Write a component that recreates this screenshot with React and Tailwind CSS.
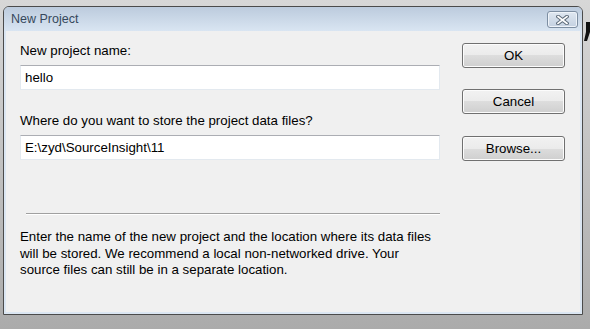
import React from 'react';

const font = { fontFamily: '"Liberation Sans", Arial, sans-serif' };

function WinButton({ children, className = '' }) {
  return (
    <button
      type="button"
      className={`h-[25px] w-[103px] rounded-[3px] border border-[#707070] bg-[linear-gradient(to_bottom,#f2f2f2_0%,#ebebeb_50%,#dddddd_50%,#cfcfcf_100%)] shadow-[inset_0_0_0_1px_#fcfcfc] text-[13.3px] leading-[23px] text-black ${className}`}
    >
      {children}
    </button>
  );
}

function TextBox({ value }) {
  return (
    <div className="h-[25px] w-[420px] border border-[#e3e9ef] border-t-[#abadb3] bg-white pl-[4px] text-[13.3px] leading-[23px] text-black">
      {value}
    </div>
  );
}

export default function App() {
  return (
    <div
      className="relative h-[329px] w-[590px] overflow-hidden bg-[linear-gradient(to_bottom,#d7d7d7,#ababab)] pl-[3px] pt-[6px]"
      style={font}
    >
      {/* bit of the desktop showing past the window */}
      <svg className="absolute left-[583px] top-[22px]" width="7" height="19" viewBox="0 0 7 19">
        <path d="M3 0 L7 0 L7 10 L4 19 L1 19 L3 10 Z" fill="#111" />
      </svg>

      {/* dialog window */}
      <div className="flex h-[309px] w-[580px] flex-col rounded-t-[6px] border border-[#4b4b4b] bg-[#dbe6f2]">
        {/* title bar */}
        <div className="flex h-[24px] items-start rounded-t-[5px] bg-[linear-gradient(to_bottom,#bccbdd,#d9e5f2)]">
          <span className="ml-[7px] mt-[5px] text-[12.5px] leading-[15px] text-[#36485c]">New Project</span>
          <div className="ml-auto mr-[4px] mt-[4px] flex h-[17px] w-[31px] items-center justify-center rounded-[3px] border border-[#7d8ea2] bg-[linear-gradient(to_bottom,#dfe7f1,#c4d1e1)] shadow-[inset_0_0_0_1px_#eef3f9]">
            <svg width="13" height="10" viewBox="0 0 13 10">
              <path d="M2 1.5 L11 8.5 M11 1.5 L2 8.5" stroke="#5d6b7a" strokeWidth="3.6" strokeLinecap="square" />
              <path d="M2 1.5 L11 8.5 M11 1.5 L2 8.5" stroke="#ffffff" strokeWidth="1.6" strokeLinecap="square" />
            </svg>
          </div>
        </div>

        {/* client area */}
        <div className="mx-[2px] mb-[2px] flex flex-1 bg-[#f0f0f0] text-[13.3px] text-black">
          {/* left column */}
          <div className="flex w-[434px] flex-col pl-[14px]">
            <div className="mt-[12px] leading-[16px]">New project name:</div>
            <div className="mt-[6px]">
              <TextBox value="hello" />
            </div>
            <div className="mt-[23px] leading-[16px]">Where do you want to store the project data files?</div>
            <div className="mt-[6px]">
              <TextBox value="E:\zyd\SourceInsight\11" />
            </div>
            <div className="ml-[6px] mt-[53px] w-[414px] border-t border-b border-t-[#a0a0a0] border-b-white" />
            <p className="mt-[14px] w-[420px] leading-[16.7px]">
              Enter the name of the new project and the location where its data files will be stored. We recommend a local non-networked drive. Your source files can still be in a separate location.
            </p>
          </div>

          {/* right column: buttons */}
          <div className="ml-[22px] flex flex-col pt-[12px]">
            <WinButton>OK</WinButton>
            <WinButton className="mt-[21px]">Cancel</WinButton>
            <WinButton className="mt-[22px]">Browse...</WinButton>
          </div>
        </div>
      </div>
    </div>
  );
}
